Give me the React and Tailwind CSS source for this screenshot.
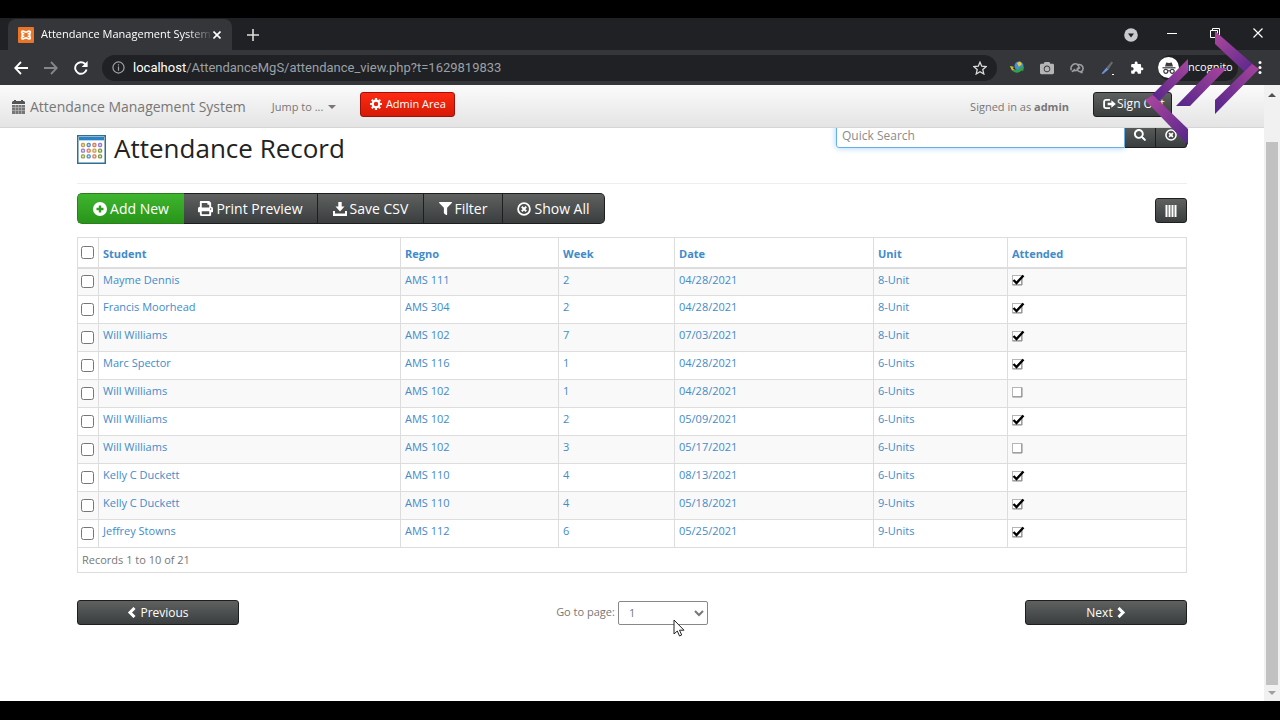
import { useState } from 'react';
import { FaCamera, FaFilter, FaPrint, FaSearch } from 'react-icons/fa';
import { MdExtension } from 'react-icons/md';

const records = [
  { id: 1, student: 'Mayme Dennis', regno: 'AMS 111', week: 2, date: '04/28/2021', unit: '8-Unit', attended: true },
  { id: 2, student: 'Francis Moorhead', regno: 'AMS 304', week: 2, date: '04/28/2021', unit: '8-Unit', attended: true },
  { id: 3, student: 'Will Williams', regno: 'AMS 102', week: 7, date: '07/03/2021', unit: '8-Unit', attended: true },
  { id: 4, student: 'Marc Spector', regno: 'AMS 116', week: 1, date: '04/28/2021', unit: '6-Units', attended: true },
  { id: 5, student: 'Will Williams', regno: 'AMS 102', week: 1, date: '04/28/2021', unit: '6-Units', attended: false },
  { id: 6, student: 'Will Williams', regno: 'AMS 102', week: 2, date: '05/09/2021', unit: '6-Units', attended: true },
  { id: 7, student: 'Will Williams', regno: 'AMS 102', week: 3, date: '05/17/2021', unit: '6-Units', attended: false },
  { id: 8, student: 'Kelly C Duckett', regno: 'AMS 110', week: 4, date: '08/13/2021', unit: '6-Units', attended: true },
  { id: 9, student: 'Kelly C Duckett', regno: 'AMS 110', week: 4, date: '05/18/2021', unit: '9-Units', attended: true },
  { id: 10, student: 'Jeffrey Stowns', regno: 'AMS 112', week: 6, date: '05/25/2021', unit: '9-Units', attended: true },
];

const columns = [
  { label: 'Student', width: 'w-[302px]' },
  { label: 'Regno', width: 'w-[158px]' },
  { label: 'Week', width: 'w-[116px]' },
  { label: 'Date', width: 'w-[199px]' },
  { label: 'Unit', width: 'w-[134px]' },
  { label: 'Attended', width: '' },
];

const darkButton = 'bg-linear-to-b from-[#5f6161] to-[#3b3e3e] text-white border-[#1d1f1f] cursor-pointer';

const PlusCircle = () => (
  <svg viewBox="0 0 14 14" className="size-[14px]" fill="none">
    <circle cx="7" cy="7" r="7" fill="#fff" />
    <path d="M7 3.5v7M3.5 7h7" stroke="#2f9e22" strokeWidth="2.4" />
  </svg>
);

const RemoveCircle = ({ className }) => (
  <svg viewBox="0 0 14 14" className={className} fill="none" stroke="currentColor">
    <circle cx="7" cy="7" r="5.9" strokeWidth="1.8" />
    <path d="M4.8 4.8l4.4 4.4M9.2 4.8L4.8 9.2" strokeWidth="2" />
  </svg>
);

const SaveIcon = () => (
  <svg viewBox="0 0 14 14" className="size-[14px]" fill="currentColor">
    <path d="M5.3 0h3.4v4.6h2.8L7 9.4 2.5 4.6h2.8z" />
    <path d="M0 9h2v2.4h10V9h2v5H0z" />
  </svg>
);

const LogOutIcon = () => (
  <svg viewBox="0 0 14 12" className="w-[13px] h-[12px]" fill="none">
    <path d="M7.5 1.5H3.2A2 2 0 0 0 1.2 3.5v5a2 2 0 0 0 2 2h4.3" stroke="#fff" strokeWidth="2" />
    <path d="M5 4.7h4V2l4.8 4L9 10V7.3H5z" fill="#fff" />
  </svg>
);

const CogIcon = () => (
  <svg viewBox="0 0 12 12" className="size-3" fill="none" stroke="currentColor">
    <circle cx="6" cy="6" r="3.3" strokeWidth="2.2" />
    <path
      d="M6 0v2M6 10v2M0 6h2M10 6h2M1.8 1.8l1.4 1.4M8.800 8.800l1.400 1.400M10.200 1.800L8.800 3.200M3.200 8.800l-1.400 1.400"
      strokeWidth="2.2"
    />
  </svg>
);

const ChevronIcon = ({ d }) => (
  <svg viewBox="0 0 9 11" className="w-[9px] h-[11px]" fill="none" stroke="currentColor" strokeWidth="3">
    <path d={d} />
  </svg>
);

const BrandCalendar = () => (
  <svg viewBox="0 0 13 14" className="w-[13px] h-[14px]">
    <path d="M2 0h2v1h5V0h2v1h1l1 1v2H0V2l1-1h1z" fill="#555" />
    <path d="M0 5h13v9H0z" fill="#777" />
    <path d="M0 7.500h13M0 10.500h13M3.500 5v9M6.500 5v9M9.500 5v9" stroke="#b5b5b5" strokeWidth="0.7" />
  </svg>
);

const XamppIcon = () => (
  <svg viewBox="0 0 16 16" className="size-4 shrink-0" fill="none">
    <rect width="16" height="16" rx="1" fill="#ea7527" />
    <path
      d="M6.300 6.500C3.500 7.500 2.800 4 5 4c1.500 0 1.500 1.200 3 1.200S9.500 4 11 4c2.200 0 1.500 3.500-1.300 2.500M6.300 9.500C3.500 8.500 2.800 12 5 12c1.500 0 1.500-1.200 3-1.200s1.500 1.200 3 1.200c2.200 0 1.500-3.500-1.300-2.500M4.300 6.500v3M11.700 6.500v3"
      stroke="#fff"
      strokeWidth="1.700"
    />
  </svg>
);

const dotColors = ['#c8a13c', '#4f8fd0', '#e07a5a', '#9a7bd0', '#9a7bd0', '#e07a5a', '#c8a13c', '#7d9a3c', '#8fa83a', '#4f8fd0', '#e07a5a', '#7d9a3c'];

const CalendarIcon = () => (
  <svg viewBox="0 0 29 29" className="w-[29px] h-[29px]" fill="none">
    <rect x="0.75" y="0.75" width="27.5" height="27.5" fill="#fff" stroke="#2f6f93" strokeWidth="1.5" />
    <rect x="2" y="2" width="25" height="3" fill="#2b83c6" />
    <path d="M2 5.5h25" stroke="#b9d7ea" />
    {dotColors.map((color, i) => (
      <rect
        key={i}
        x={4.5 + (i % 4) * 5.7}
        y={8.5 + Math.floor(i / 4) * 5.7}
        width="3"
        height="3"
        rx="1"
        fill="#e9e9e9"
        stroke={color}
        strokeWidth="1.3"
      />
    ))}
  </svg>
);

const Mark = ({ checked }) => (
  <svg viewBox="0 0 13 12" className="w-[13px] h-[12px]" fill="none" role="img" aria-label={checked ? 'Yes' : 'No'}>
    <rect x="0.5" y="1.5" width="9" height="9" fill="#fff" stroke="#b5b5b5" />
    <path d="M10 1.5v9.5H0.5" stroke="#8a8a8a" />
    {checked && <path d="M1.5 6l3 3L11.5 1.5" stroke="#000" strokeWidth="2.4" />}
  </svg>
);

const BrandOverlay = () => (
  <svg viewBox="0 0 114 116" className="absolute z-20 top-[30px] right-[21px] w-[114px] h-[116px] pointer-events-none">
    <defs>
      <linearGradient id="down" x1="0" y1="0" x2="1" y2="1">
        <stop offset="0" stopColor="#b0489f" />
        <stop offset="1" stopColor="#53258a" />
      </linearGradient>
      <linearGradient id="up" x1="1" y1="0" x2="0" y2="1">
        <stop offset="0" stopColor="#a8459c" />
        <stop offset="1" stopColor="#53258a" />
      </linearGradient>
    </defs>
    <path d="M70 1L110 36 101 43 70 14z" fill="url(#down)" />
    <path d="M107 34L114 39 70 84V70z" fill="url(#up)" />
    <path d="M68 38H82L45 76H31z" fill="url(#up)" />
    <path d="M43 29V42L14 71 7 65z" fill="url(#up)" />
    <path d="M0 70L8 65 43 99V115z" fill="url(#down)" />
  </svg>
);

const BrowserChrome = () => (
  <header className="bg-[#202124] text-white">
    <div className="flex items-end h-8">
      <div className="flex items-center ml-2 w-[224px] h-[31px] pl-[10px] pr-[11px] rounded-t-lg bg-[#35363a]">
        <XamppIcon />
        <span className="ml-[7px] flex-1 whitespace-nowrap text-[11px] mask-r-from-85%">
          Attendance Management System
        </span>
        <button aria-label="Close tab" className="h-4 w-2 flex items-center">
          <svg viewBox="0 0 8 8" className="size-2" stroke="#fff" strokeWidth="1.6"><path d="M0.5 0.5l7 7M7.5 0.5l-7 7" /></svg>
        </button>
      </div>
      <button aria-label="New tab" className="ml-[14px] h-[31px] w-[14px] flex items-center justify-center">
        <svg viewBox="0 0 12 12" className="size-3" stroke="#ddd" strokeWidth="1.6"><path d="M6 0v12M0 6h12" /></svg>
      </button>
      <div className="ml-auto flex items-center h-[31px] mr-[17px] gap-[33px]">
        <button aria-label="Search tabs" className="-mr-1 size-[14px]">
          <svg viewBox="0 0 14 14"><circle cx="7" cy="7" r="6.8" fill="#c9cacf" /><path d="M4 5.5h6L7 9.5z" fill="#202124" /></svg>
        </button>
        <button aria-label="Minimize" className="w-[10px] pb-1">
          <svg viewBox="0 0 10 10" stroke="#fff"><path d="M0 5.5h10" /></svg>
        </button>
        <button aria-label="Restore" className="w-[10px] pb-1">
          <svg viewBox="0 0 10 10" fill="none" stroke="#fff"><path d="M0.5 2.5h7v7h-7zM2.5 2.5v-2h7v7h-2" /></svg>
        </button>
        <button aria-label="Close" className="w-[10px] pb-1">
          <svg viewBox="0 0 10 10" stroke="#fff" strokeWidth="1.2"><path d="M0.5 0.5l9 9M9.5 0.5l-9 9" /></svg>
        </button>
      </div>
    </div>
    <div className="flex items-center h-[35px] bg-[#35363a] pl-[14px] pr-[18px]">
      <button aria-label="Back" className="w-[14px]">
        <svg viewBox="0 0 14 14" fill="none" stroke="#fff" strokeWidth="1.8"><path d="M14 7H1.5M7 1L1.2 7 7 13" /></svg>
      </button>
      <button aria-label="Forward" className="ml-4 w-[14px]">
        <svg viewBox="0 0 14 14" fill="none" stroke="#85868a" strokeWidth="1.8"><path d="M0 7h12.5M7 1l5.8 6L7 13" /></svg>
      </button>
      <button aria-label="Reload" className="ml-4 w-[14px]">
        <svg viewBox="0 0 14 14" fill="none"><path d="M12.6 8.5A5.8 5.8 0 1 1 11 2.8L12.5 4.3" stroke="#fff" strokeWidth="1.9" /><path d="M13.6 0v6H7.6z" fill="#fff" /></svg>
      </button>
      <div className="ml-[14px] flex-1 flex items-center h-[26px] rounded-full bg-[#202124] px-[10px]">
        <svg viewBox="0 0 14 14" className="w-[13px] h-[13px] shrink-0" fill="none" stroke="#a0a1a5" strokeWidth="1.3"><circle cx="7" cy="7" r="6" /><path d="M7 6v4.5M7 3.5v1.3" /></svg>
        <span className="ml-2 flex-1 font-[Roboto] text-[13px] whitespace-nowrap text-[#9aa0a6]">
          <span className="text-white">localhost</span>/AttendanceMgS/attendance_view.php?t=1629819833
        </span>
        <svg viewBox="0 0 24 24" className="w-[14px] h-[14px]" fill="none" stroke="#ddd" strokeWidth="2.2"><path d="M12 2l3 7 7.5.7-5.7 5 1.7 7.5L12 18.3 5.5 22.2l1.7-7.5-5.7-5L9 9z" /></svg>
      </div>
      <div className="flex items-center ml-[13px] gap-4">
        <svg viewBox="0 0 14 14" className="size-[14px]">
          <circle cx="9" cy="5" r="4.500" fill="#3f8fdc" />
          <path d="M7 2l3-1.500 2 2.500-3 3z" fill="#f0c530" />
          <path d="M0 5l4 1-1.500 1C5 9.500 8 9 10 7l-1-1.500 5 .5-1 4.500-1-1.200C8 13 3 13 0 5z" fill="#35a049" />
          <path d="M0 5l4 1-1.500 1 1.500 1.500-2 1z" fill="#e3b52c" />
        </svg>
        <FaCamera className="size-[14px] text-[#b5b5b5]" />
        <svg viewBox="0 0 16 12" className="w-[14px] h-3" fill="none" stroke="#9c9ea1" strokeWidth="1.8">
          <path d="M1.500 8.500C0 5 3 1 6.500 1.200S11 5 9 7.500 5 9 4.500 7M8 3c3-2.500 7 0 7 3.500s-4 5-6 2.500 1-4.500 2.500-2.500" />
          <path d="M2 10l4-1.500M12 11h2.500" />
        </svg>
        <svg viewBox="0 0 14 14" className="size-[14px]">
          <path d="M1.500 12.500L6.500 6.500 8.500 8.500l-5.500 4.500z" fill="#6f93df" />
          <path d="M6.500 6.500L11.500 0.500l1.500 1L8.500 8.500z" fill="#6a6a70" />
          <path d="M12 13.500h2" stroke="#fff" />
        </svg>
        <MdExtension className="size-[14px] text-white" />
      </div>
      <div className="ml-[14px] flex items-center h-[26px] w-20 rounded-full bg-[#202124] text-[11px]">
        <span className="flex size-[21px] shrink-0 items-center justify-center rounded-full bg-white">
          <svg viewBox="0 0 14 14" className="size-[14px]" fill="none">
            <path d="M4.2 1.500L7 2l2.800-.5L11 5.500H3z" fill="#3c3d41" />
            <path d="M0.500 6.800h13" stroke="#3c3d41" strokeWidth="1.200" />
            <circle cx="3.800" cy="10.300" r="2" stroke="#3c3d41" strokeWidth="1.200" />
            <circle cx="10.200" cy="10.300" r="2" stroke="#3c3d41" strokeWidth="1.200" />
            <path d="M5.800 10q1.200-.8 2.400 0" stroke="#3c3d41" />
          </svg>
        </span>
        <span className="ml-1.5">Incognito</span>
      </div>
      <button aria-label="Menu" className="ml-5 w-1">
        <svg viewBox="0 0 4 13" fill="#fff"><circle cx="2" cy="1.500" r="1.500" /><circle cx="2" cy="6.500" r="1.500" /><circle cx="2" cy="11.500" r="1.500" /></svg>
      </button>
    </div>
  </header>
);

const Navbar = () => (
  <nav className="relative z-10 flex items-center h-[43px] pl-3 pr-[92px] pb-1 bg-linear-to-b from-[#fbfbfb] to-[#e4e4e4] border-b border-[#d5d5d5] text-[#777]">
    <a href="#home" className="flex items-center gap-[5px] mt-1.5 text-sm">
      <BrandCalendar />
      Attendance Management System
    </a>
    <button className="ml-[26px] mt-1.5 flex items-center gap-[5px]">
      Jump to ...
      <span className="border-x-4 border-t-4 border-x-transparent border-t-[#777]" />
    </button>
    <button className="ml-6 flex items-center justify-center gap-1 w-[95px] h-[25px] rounded-[3px] border border-[#9c1109] bg-linear-to-b from-[#ff2a12] to-[#d61a05] text-white">
      <CogIcon /> Admin Area
    </button>
    <p className="ml-auto mt-1.5">
      Signed in as <strong>admin</strong>
    </p>
    <button className={`ml-6 flex items-center gap-px w-[79px] h-[25px] pl-[9px] whitespace-nowrap rounded-[3px] border text-xs ${darkButton}`}>
      <LogOutIcon /> Sign Out
    </button>
  </nav>
);

const Scrollbar = () => (
  <div className="w-4 flex flex-col items-center bg-[#f1f1f1] py-1">
    <span className="mt-1 border-x-4 border-b-4 border-x-transparent border-b-[#505050]" />
    <span className="mt-[45px] mb-1.5 flex-1 w-3 bg-[#c1c1c1]" />
    <span className="mb-0.5 border-x-4 border-t-4 border-x-transparent border-t-[#a0a0a0]" />
  </div>
);

export default function App() {
  const [search, setSearch] = useState('');
  const [page, setPage] = useState('1');
  const [selected, setSelected] = useState([]);

  const toggle = (id) => {
    setSelected(selected.includes(id) ? selected.filter((s) => s !== id) : [...selected, id]);
  };

  const toggleAll = (e) => {
    setSelected(e.target.checked ? records.map((r) => r.id) : []);
  };

  return (
    <div className="relative flex flex-col min-h-screen bg-black pt-[18px] pb-[19px] font-['Open_Sans','Noto_Sans',sans-serif]">
      <BrowserChrome />
      <div className="flex flex-1 bg-white text-[11px]">
        <div className="flex-1 min-w-0">
          <Navbar />
          <main className="max-w-[1110px] mx-auto text-[#777]">
            <div className="flex items-start justify-between h-14 border-b border-[#eee]">
              <h1 className="flex items-center gap-2 pt-[2px] text-[26px] leading-9 text-[#222]">
                <CalendarIcon />
                <span className="pb-[2px]">Attendance Record</span>
              </h1>
              <form className="-mt-[6px] flex" onSubmit={(e) => e.preventDefault()}>
                <input
                  type="text"
                  autoFocus
                  aria-label="Quick Search"
                  placeholder="Quick Search"
                  value={search}
                  onChange={(e) => setSearch(e.target.value)}
                  className="w-[289px] h-[26px] px-[5px] rounded-l-[3px] border border-[#66afe9] text-xs shadow-[0_0_6px_#9fd0f5] outline-none placeholder:text-[#8c8c8c]"
                />
                <button aria-label="Search" className={`w-[31px] h-[26px] flex items-center justify-center border-y border-r ${darkButton}`}>
                  <FaSearch className="size-3" />
                </button>
                <button aria-label="Clear search" className={`w-[31px] h-[26px] flex items-center justify-center rounded-r-[3px] border-y border-r ${darkButton}`}>
                  <RemoveCircle className="size-3" />
                </button>
              </form>
            </div>

            <div className="flex items-center justify-between mt-[9px]">
              <div className="flex text-sm whitespace-nowrap">
                <button className="flex items-center justify-center gap-[3px] w-[107px] h-[31px] rounded-l-[5px] border border-r-0 border-[#2b7d20] bg-linear-to-b from-[#3fb52f] to-[#289519] text-white">
                  <PlusCircle /> Add New
                </button>
                <button className={`flex items-center justify-center gap-[3px] w-[134px] h-[31px] border-y border-r ${darkButton}`}>
                  <FaPrint className="size-[15px]" /> Print Preview
                </button>
                <button className={`flex items-center justify-center gap-[3px] w-[106px] h-[31px] border-y border-r ${darkButton}`}>
                  <SaveIcon /> Save CSV
                </button>
                <button className={`flex items-center justify-center gap-[3px] w-[79px] h-[31px] border-y border-r ${darkButton}`}>
                  <FaFilter className="size-[13px]" /> Filter
                </button>
                <button className={`flex items-center justify-center gap-[3px] w-[102px] h-[31px] rounded-r-[5px] border-y border-r ${darkButton}`}>
                  <RemoveCircle className="size-[14px]" /> Show All
                </button>
              </div>
              <button aria-label="Show or hide columns" className={`mt-1 w-8 h-[25px] flex items-center justify-center rounded-[3px] border ${darkButton}`}>
                <svg viewBox="0 0 12 12" className="size-3" stroke="#fff" strokeWidth="2"><path d="M1.5 0v12M4.5 0v12M7.5 0v12M10.5 0v12" /></svg>
              </button>
            </div>

            <table className="mt-[13px] w-full table-fixed border-collapse border border-[#ddd] text-left text-[#428bca]">
              <thead>
                <tr className="h-[30px] border-b-2 border-[#ddd]">
                  <th className="w-[21px] border-r border-[#ddd] p-0">
                    <input
                      type="checkbox"
                      aria-label="Select all records"
                      checked={selected.length === records.length}
                      onChange={toggleAll}
                      className="block ml-[3px] size-[13px]"
                    />
                  </th>
                  {columns.map((col) => (
                    <th key={col.label} className={`${col.width} border-r border-[#ddd] px-1 pt-1 pb-0 font-bold`}>
                      <a href={`#sort-${col.label}`}>{col.label}</a>
                    </th>
                  ))}
                </tr>
              </thead>
              <tbody>
                {records.map((r) => (
                  <tr key={r.id} className="h-[28px] border-b border-[#ddd] odd:bg-[#f9f9f9] [&>td]:border-r [&>td]:border-[#ddd] [&>td]:px-1 [&>td]:pb-1">
                    <td>
                      <input
                        type="checkbox"
                        aria-label={`Select ${r.student}`}
                        checked={selected.includes(r.id)}
                        onChange={() => toggle(r.id)}
                        className="block -ml-px mt-1 size-[13px]"
                      />
                    </td>
                    <td><a href={`#record-${r.id}`}>{r.student}</a></td>
                    <td><a href={`#record-${r.id}`}>{r.regno}</a></td>
                    <td><a href={`#record-${r.id}`}>{r.week}</a></td>
                    <td><a href={`#record-${r.id}`}>{r.date}</a></td>
                    <td><a href={`#record-${r.id}`}>{r.unit}</a></td>
                    <td><Mark checked={r.attended} /></td>
                  </tr>
                ))}
              </tbody>
              <tfoot>
                <tr className="h-[25px] text-[#777]">
                  <td colSpan={7} className="px-1">Records 1 to 10 of 21</td>
                </tr>
              </tfoot>
            </table>

            <div className="flex items-center justify-between mt-[27px]">
              <button className={`flex items-center justify-center gap-1 w-[162px] h-[25px] rounded-[3px] border text-xs ${darkButton}`}>
                <ChevronIcon d="M7.5 1L3 5.5 7.5 10" /> Previous
              </button>
              <div className="flex items-center gap-[3px]">
                <label htmlFor="page">Go to page:</label>
                <select
                  id="page"
                  value={page}
                  onChange={(e) => setPage(e.target.value)}
                  className="w-[90px] h-[24px] pl-[6px] rounded-[2px] border border-[#888] bg-white"
                >
                  <option>1</option>
                  <option>2</option>
                  <option>3</option>
                </select>
              </div>
              <button className={`flex items-center justify-center gap-1 w-[162px] h-[25px] rounded-[3px] border text-xs ${darkButton}`}>
                Next <ChevronIcon d="M1.5 1L6 5.5 1.5 10" />
              </button>
            </div>
          </main>
        </div>
        <Scrollbar />
      </div>
      <BrandOverlay />
      {/* mouse pointer */}
      <svg viewBox="0 0 12 18" className="absolute left-[673px] top-[619px] w-3 h-[18px] pointer-events-none">
        <path d="M1 1v14l3.3-3 2.2 5 2.2-1-2.2-4.800H11z" fill="#fff" stroke="#222" />
      </svg>
    </div>
  );
}
